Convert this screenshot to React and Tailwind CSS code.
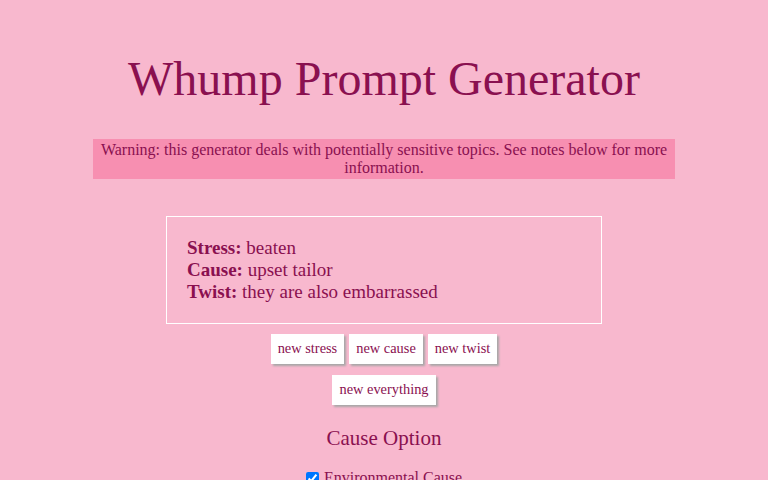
import { useState } from "react";

const stresses = ["beaten"];
const causes = ["upset tailor"];
const twists = ["they are also embarrassed"];

const Btn = ({ children, onClick }) => (
  <button
    onClick={onClick}
    className="bg-white px-[7px] h-[30px] text-[14.4px] text-[#8a1050] shadow-[2px_2px_2px_#a8a8a8]"
  >
    {children}
  </button>
);

export default function App() {
  const [env, setEnv] = useState(true);

  return (
    <div className="min-h-screen bg-[#f8b8ce] text-[#8a1050] font-['Liberation_Serif',serif] flex flex-col items-center">
      <h1 className="mt-[51px] text-[48px] leading-[56px]">Whump Prompt Generator</h1>

      <div className="mt-[32px] w-[582px] bg-[#f78fb1] px-[6px] py-[2px] text-center text-[16px] leading-[18px]">
        Warning: this generator deals with potentially sensitive topics. See notes below for more information.
      </div>

      <div className="mt-[37px] w-[436px] border border-white px-[20px] py-[20px] text-[19px] leading-[22px]">
        <div>
          <b>Stress:</b> {stresses[0]}
        </div>
        <div>
          <b>Cause:</b> {causes[0]}
        </div>
        <div>
          <b>Twist:</b> {twists[0]}
        </div>
      </div>

      <div className="mt-[10px] flex gap-[5px]">
        <Btn>new stress</Btn>
        <Btn>new cause</Btn>
        <Btn>new twist</Btn>
      </div>
      <div className="mt-[11px]">
        <Btn>new everything</Btn>
      </div>

      <h2 className="mt-[21px] text-[21px] leading-[24px]">Cause Option</h2>

      <label className="mt-[16px] flex items-center gap-[5px] text-[16px]">
        <input type="checkbox" checked={env} onChange={(e) => setEnv(e.target.checked)} className="w-[13px] h-[13px]" />
        Environmental Cause
      </label>
    </div>
  );
}
